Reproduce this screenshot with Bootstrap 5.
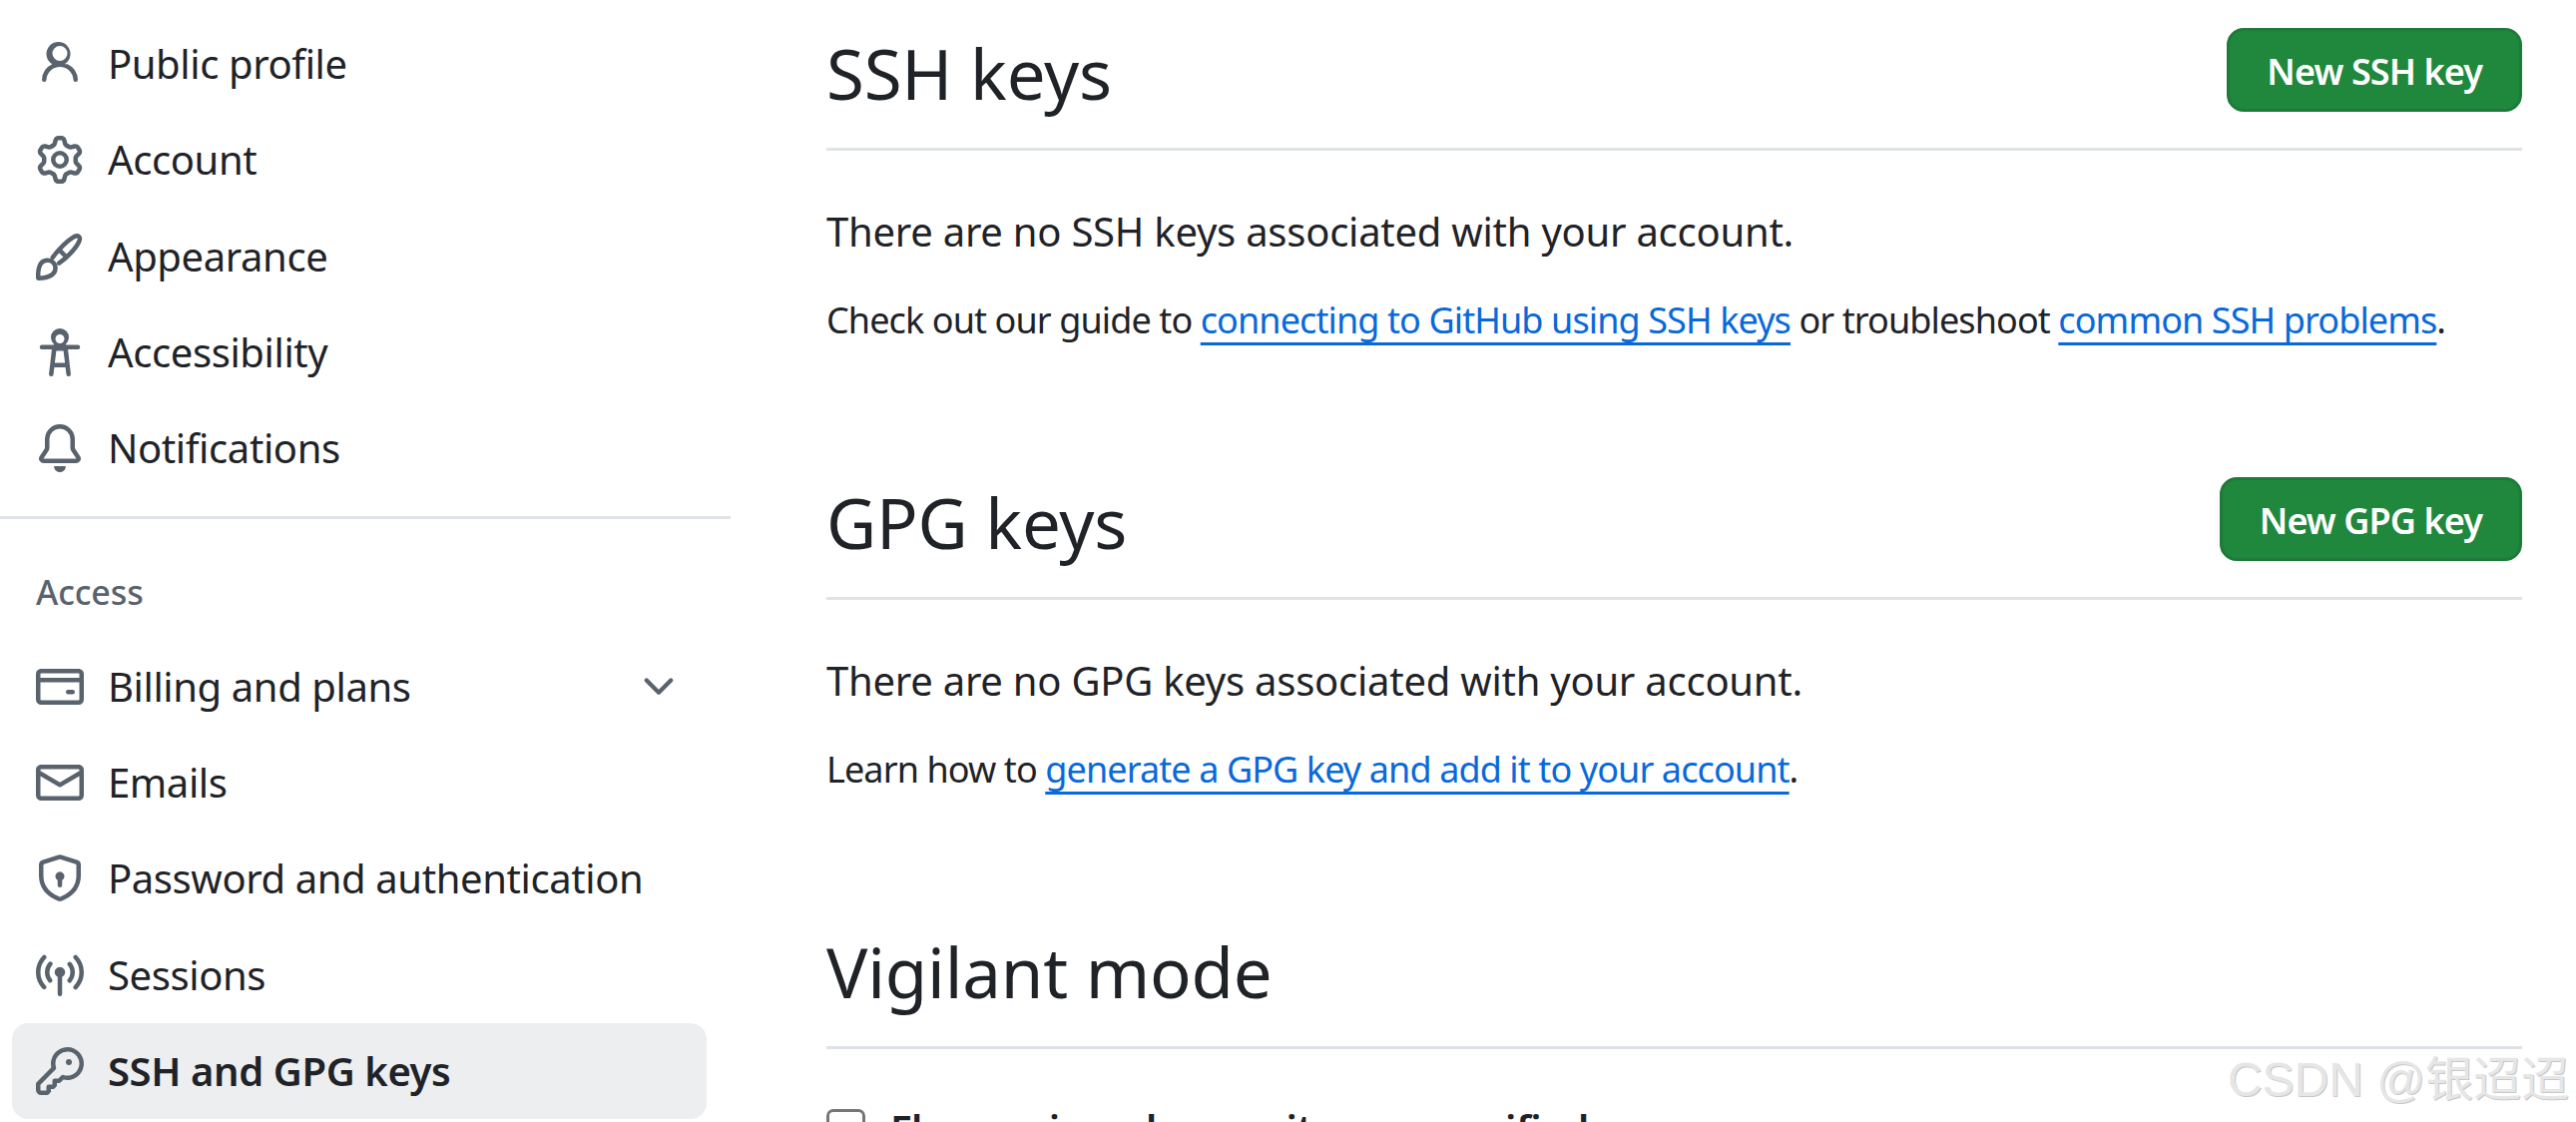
<!DOCTYPE html>
<html lang="en">
<head>
    <meta charset="UTF-8" />
    <meta name="viewport" content="width=device-width, initial-scale=1.0" />
    <title>SSH and GPG keys</title>
    <link href="https://cdn.jsdelivr.net/npm/bootstrap@5.3.0/dist/css/bootstrap.min.css" rel="stylesheet" />
    <style>
        html, body {
            height: 100%;
            overflow: hidden;
        }
        body {
            font-family: "Noto Sans", "Noto Sans CJK SC", sans-serif;
            color: #1f2328;
            background: #fff;
            position: relative;
        }
        .side-col {
            width: 732px;
            flex: none;
            padding-top: 16px;
        }
        .side-link {
            height: 96.3px;
            margin-left: 12px;
            width: 696px;
            padding: 0 0 0 24px;
            gap: 24px;
            font-size: 40px;
            letter-spacing: -0.4px;
            color: #1f2328;
            border-radius: 16px;
        }
        .side-link:hover, .side-link:focus {
            color: #1f2328;
        }
        .side-link svg {
            width: 48px;
            height: 48px;
            fill: #59636e;
            flex: none;
        }
        .side-link .side-line {
            fill: none;
            stroke: #59636e;
            stroke-width: 1.5;
            stroke-linecap: round;
            stroke-linejoin: round;
        }
        .side-link .side-chev {
            margin-left: auto;
            margin-right: 25px;
            width: 46px;
            height: 46px;
        }
        .side-on {
            background: #eceef0;
            font-weight: 600;
        }
        .side-rule {
            height: 3px;
            margin: 20px 0 0;
            background: #dfe3e7;
            opacity: 1;
            border: 0;
        }
        .side-label {
            font-size: 34px;
            font-weight: 500;
            letter-spacing: -0.1px;
            color: #59636e;
            padding-left: 36px;
            margin: 48px 0 21px;
            line-height: 50px;
        }
        .main-col {
            margin-left: 96px;
            width: 1699px;
            flex: none;
            padding-top: 28px;
        }
        .key-sec {
            margin-bottom: 128px;
        }
        .key-head {
            height: 123px;
            padding-bottom: 36px;
            border-bottom: 3px solid #dfe3e7;
        }
        .key-head h2 {
            font-size: 69px;
            font-weight: 400;
            letter-spacing: -0.2px;
            line-height: 92px;
            margin: 5px 0 0;
        }
        .key-btn {
            height: 84px;
            padding: 3px 37px 0;
            font-size: 36px;
            font-weight: 600;
            letter-spacing: -0.9px;
            line-height: 75px;
            border-radius: 17px;
            border: 3px solid #1f7a3a;
            background: #1f883d;
            color: #fff;
        }
        .key-lead {
            font-size: 40px;
            letter-spacing: -0.25px;
            line-height: 70px;
            margin: 46px 0 0;
        }
        .key-note {
            font-size: 36px;
            letter-spacing: -0.9px;
            line-height: 58px;
            margin: 25px 0 0;
        }
        .key-note a {
            color: #0969da;
            text-decoration-thickness: 3px;
            text-underline-offset: 9px;
        }
        .vig-check {
            margin-top: 51px;
            padding-left: 64px;
            font-size: 40px;
            font-weight: 600;
            letter-spacing: -0.45px;
            line-height: 58px;
        }
        .vig-check .form-check-input {
            width: 39px;
            height: 39px;
            margin-left: -64px;
            margin-top: 9px;
            border: 3px solid #767676;
            border-radius: 7px;
        }
        .stamp {
            position: absolute;
            right: 7px;
            bottom: 12px;
            font-family: "Liberation Sans", "Noto Sans CJK SC", sans-serif;
            font-size: 48px;
            line-height: 60px;
            color: #e6e6e6;
            text-shadow: 1px 1px 0 #c8c8c8;
            white-space: nowrap;
        }
    </style>
</head>
<body>
<div class="d-flex">
    <aside class="side-col">
        <nav class="nav flex-column">
            <a class="nav-link side-link d-flex align-items-center" href="#">
                <svg viewBox="0 0 16 16"><path d="M10.561 8.073a6.005 6.005 0 0 1 3.432 5.142.75.75 0 1 1-1.498.07 4.5 4.5 0 0 0-8.99 0 .75.75 0 1 1-1.498-.07 6.004 6.004 0 0 1 3.431-5.142 3.999 3.999 0 1 1 4.123 0ZM10.5 4.5a2.5 2.5 0 1 0-5 0 2.5 2.5 0 0 0 5 0Z"/></svg>
                Public profile
            </a>
            <a class="nav-link side-link d-flex align-items-center" href="#">
                <svg viewBox="0 0 16 16"><path d="M8 0a8.2 8.2 0 0 1 .701.031C9.444.095 9.99.645 10.16 1.29l.288 1.107c.018.066.079.158.212.224.231.114.454.243.668.386.123.082.233.09.299.071l1.103-.303c.644-.176 1.392.021 1.82.63.27.385.506.792.704 1.218.315.675.111 1.422-.364 1.891l-.814.806c-.049.048-.098.147-.088.294.016.257.016.515 0 .772-.01.147.038.246.088.294l.814.806c.475.469.679 1.216.364 1.891a7.977 7.977 0 0 1-.704 1.217c-.428.61-1.176.807-1.82.63l-1.102-.302c-.067-.019-.177-.011-.3.071a5.909 5.909 0 0 1-.668.386c-.133.066-.194.158-.211.224l-.29 1.106c-.168.646-.715 1.196-1.458 1.26a8.006 8.006 0 0 1-1.402 0c-.743-.064-1.289-.614-1.458-1.26l-.289-1.106c-.018-.066-.079-.158-.212-.224a5.738 5.738 0 0 1-.668-.386c-.123-.082-.233-.09-.299-.071l-1.103.303c-.644.176-1.392-.021-1.82-.63a8.12 8.12 0 0 1-.704-1.218c-.315-.675-.111-1.422.363-1.891l.815-.806c.05-.048.098-.147.088-.294a6.214 6.214 0 0 1 0-.772c.01-.147-.038-.246-.088-.294l-.815-.806C.635 6.045.431 5.298.746 4.623a7.92 7.92 0 0 1 .704-1.217c.428-.61 1.176-.807 1.82-.63l1.102.302c.067.019.177.011.3-.071.214-.143.437-.272.668-.386.133-.066.194-.158.211-.224l.29-1.106C6.009.645 6.556.095 7.299.03 7.53.01 7.764 0 8 0Zm-.571 1.525c-.036.003-.108.036-.137.146l-.289 1.105c-.147.561-.549.967-.998 1.189-.173.086-.34.183-.5.29-.417.278-.97.423-1.529.27l-1.103-.303c-.109-.03-.175.016-.195.045-.22.312-.412.644-.573.99-.014.031-.021.11.059.19l.815.806c.411.406.562.957.53 1.456a4.709 4.709 0 0 0 0 .582c.032.499-.119 1.05-.53 1.456l-.815.806c-.081.08-.073.159-.059.19.162.346.353.677.573.989.02.03.085.076.195.046l1.102-.303c.56-.153 1.113-.008 1.53.27.161.107.328.204.501.29.447.222.85.629.997 1.189l.289 1.105c.029.109.101.143.137.146a6.6 6.6 0 0 0 1.142 0c.036-.003.108-.036.137-.146l.289-1.105c.147-.561.549-.967.998-1.189.173-.086.34-.183.5-.29.417-.278.97-.423 1.529-.27l1.103.303c.109.029.175-.016.195-.045.22-.313.411-.644.573-.99.014-.031.021-.11-.059-.19l-.815-.806c-.411-.406-.562-.957-.53-1.456a4.709 4.709 0 0 0 0-.582c-.032-.499.119-1.05.53-1.456l.815-.806c.081-.08.073-.159.059-.19a6.464 6.464 0 0 0-.573-.989c-.02-.03-.085-.076-.195-.046l-1.102.303c-.56.153-1.113.008-1.53-.27a4.44 4.44 0 0 0-.501-.29c-.447-.222-.85-.629-.997-1.189l-.289-1.105c-.029-.11-.101-.143-.137-.146a6.6 6.6 0 0 0-1.142 0ZM11 8a3 3 0 1 1-6 0 3 3 0 0 1 6 0ZM9.5 8a1.5 1.5 0 1 0-3.001.001A1.5 1.5 0 0 0 9.5 8Z"/></svg>
                Account
            </a>
            <a class="nav-link side-link d-flex align-items-center" href="#">
                <svg viewBox="0 0 16 16"><path class="side-line" d="M.75 15.25c-.1-1.9.1-3.7.9-4.9.9-1.3 3-1.5 4.1-.4 1.1 1.1 1 3.1-.3 4.1-1.2.9-2.9 1.2-4.7 1.2Z"/><path class="side-line" d="M5.6 8.3C7.5 5.6 10.6 2.6 12.7 1.4c1.5-.8 2.4.1 1.7 1.6-1 2.2-3.9 5.3-6.7 7.2"/><path class="side-line" d="M7.9 5.9l2.1 2.1"/></svg>
                Appearance
            </a>
            <a class="nav-link side-link d-flex align-items-center" href="#">
                <svg viewBox="0 0 16 16"><path d="M9.923 5.302c.063.063.122.129.178.198H14A.75.75 0 0 1 14 7h-3.3l.578 5.163.362 2.997a.75.75 0 0 1-1.49.18L9.868 13H6.132l-.282 2.34a.75.75 0 0 1-1.49-.18l.362-2.997L5.3 7H2a.75.75 0 0 1 0-1.5h3.9a2.54 2.54 0 0 1 .176-.198 3 3 0 1 1 3.847 0ZM9.2 7.5H6.8l-.5 4h3.4ZM8 5a1.5 1.5 0 1 0 0-3 1.5 1.5 0 0 0 0 3Z"/></svg>
                Accessibility
            </a>
            <a class="nav-link side-link d-flex align-items-center" href="#">
                <svg viewBox="0 0 16 16"><path d="M8 16a2 2 0 0 0 1.985-1.75c.017-.137-.097-.25-.235-.25h-3.5c-.138 0-.252.113-.235.25A2 2 0 0 0 8 16ZM3 5a5 5 0 0 1 10 0v2.947c0 .05.015.098.042.139l1.703 2.555A1.519 1.519 0 0 1 13.482 13H2.518a1.516 1.516 0 0 1-1.263-2.36l1.703-2.554A.255.255 0 0 0 3 7.947Zm5-3.5A3.5 3.5 0 0 0 4.5 5v2.947c0 .346-.102.683-.294.97l-1.703 2.556a.017.017 0 0 0-.003.01l.001.006c0 .002.002.004.004.006l.006.004.007.001h10.964l.007-.001.006-.004.004-.006.001-.007a.017.017 0 0 0-.003-.01l-1.703-2.554a1.745 1.745 0 0 1-.294-.97V5A3.5 3.5 0 0 0 8 1.5Z"/></svg>
                Notifications
            </a>
        </nav>
        <hr class="side-rule" />
        <div class="side-label">Access</div>
        <nav class="nav flex-column">
            <a class="nav-link side-link d-flex align-items-center" href="#">
                <svg viewBox="0 0 16 16"><path d="M10.75 9a.75.75 0 0 0 0 1.5h1.5a.75.75 0 0 0 0-1.5h-1.5Z"/><path d="M0 3.75C0 2.784.784 2 1.75 2h12.5c.966 0 1.75.784 1.75 1.75v8.5A1.75 1.75 0 0 1 14.25 14H1.75A1.75 1.75 0 0 1 0 12.25ZM14.5 6.5h-13v5.75c0 .138.112.25.25.25h12.5a.25.25 0 0 0 .25-.25Zm0-2.75a.25.25 0 0 0-.25-.25H1.75a.25.25 0 0 0-.25.25V5h13Z"/></svg>
                Billing and plans
                <svg class="side-chev" viewBox="0 0 16 16"><path d="M12.78 5.22a.749.749 0 0 1 0 1.06l-4.25 4.25a.749.749 0 0 1-1.06 0L3.22 6.28a.749.749 0 1 1 1.06-1.06L8 8.939l3.72-3.719a.749.749 0 0 1 1.06 0Z"/></svg>
            </a>
            <a class="nav-link side-link d-flex align-items-center" href="#">
                <svg viewBox="0 0 16 16"><path d="M1.75 2h12.5c.966 0 1.75.784 1.75 1.75v8.5A1.75 1.75 0 0 1 14.25 14H1.75A1.75 1.75 0 0 1 0 12.25v-8.5C0 2.784.784 2 1.75 2ZM1.5 12.251c0 .138.112.25.25.25h12.5a.25.25 0 0 0 .25-.25V5.809L8.38 9.397a.75.75 0 0 1-.76 0L1.5 5.809v6.442Zm13-8.181v-.32a.25.25 0 0 0-.25-.25H1.75a.25.25 0 0 0-.25.25v.32L8 7.88Z"/></svg>
                Emails
            </a>
            <a class="nav-link side-link d-flex align-items-center" href="#">
                <svg viewBox="0 0 16 16"><path d="M7.467.133a1.748 1.748 0 0 1 1.066 0l5.25 1.68A1.75 1.75 0 0 1 15 3.48V7c0 1.566-.32 3.182-1.303 4.682-.983 1.498-2.585 2.813-5.032 3.855a1.697 1.697 0 0 1-1.33 0c-2.447-1.042-4.049-2.357-5.032-3.855C1.32 10.182 1 8.566 1 7V3.48a1.75 1.75 0 0 1 1.217-1.667Zm.61 1.429a.25.25 0 0 0-.153 0l-5.25 1.68a.25.25 0 0 0-.174.238V7c0 1.358.275 2.666 1.057 3.86.784 1.194 2.121 2.34 4.366 3.297a.196.196 0 0 0 .154 0c2.245-.956 3.582-2.104 4.366-3.298C13.225 9.666 13.5 8.36 13.5 7V3.48a.251.251 0 0 0-.174-.237l-5.25-1.68ZM8.75 8.582v1.668a.75.75 0 0 1-1.5 0V8.582a1.5 1.5 0 1 1 1.5 0Z"/></svg>
                Password and authentication
            </a>
            <a class="nav-link side-link d-flex align-items-center" href="#">
                <svg viewBox="0 0 16 16"><path d="M8.75 8.582v5.668a.75.75 0 0 1-1.5 0V8.582a1.75 1.75 0 1 1 1.5 0Zm3.983-7.125a.75.75 0 0 1 1.06.026A7.976 7.976 0 0 1 16 7c0 2.139-.84 4.083-2.207 5.517a.75.75 0 1 1-1.086-1.034A6.474 6.474 0 0 0 14.5 7a6.474 6.474 0 0 0-1.793-4.483.75.75 0 0 1 .026-1.06Zm-9.466 0a.75.75 0 0 1 .026 1.06A6.474 6.474 0 0 0 1.5 7a6.47 6.47 0 0 0 1.793 4.483.75.75 0 0 1-1.086 1.034A7.973 7.973 0 0 1 0 7c0-2.139.84-4.083 2.207-5.517a.75.75 0 0 1 1.06-.026Zm8.556 2.321A4.988 4.988 0 0 1 13 7a4.988 4.988 0 0 1-1.177 3.222.75.75 0 1 1-1.146-.967A3.487 3.487 0 0 0 11.5 7c0-.86-.309-1.645-.823-2.255a.75.75 0 0 1 1.146-.967Zm-6.492.958A3.48 3.48 0 0 0 4.5 7a3.48 3.48 0 0 0 .823 2.255.75.75 0 0 1-1.146.967A4.981 4.981 0 0 1 3 7a4.98 4.98 0 0 1 1.18-3.225.75.75 0 1 1 1.143.96Z"/></svg>
                Sessions
            </a>
            <a class="nav-link side-link side-on d-flex align-items-center" href="#">
                <svg viewBox="0 0 16 16"><path d="M10.5 0a5.499 5.499 0 1 1-1.288 10.848l-.932.932a.749.749 0 0 1-.53.22H7v.75a.749.749 0 0 1-.22.53l-.5.5a.749.749 0 0 1-.53.22H5v.75a.749.749 0 0 1-.22.53l-.5.5a.749.749 0 0 1-.53.22h-2A1.75 1.75 0 0 1 0 14.25v-2c0-.199.079-.389.22-.53l4.932-4.932A5.5 5.5 0 0 1 10.5 0Zm-4 5.5c-.001.431.069.86.205 1.269a.75.75 0 0 1-.181.768L1.5 12.56v1.69c0 .138.112.25.25.25h1.69l.06-.06v-1.19a.75.75 0 0 1 .75-.75h1.19l.06-.06v-1.19a.75.75 0 0 1 .75-.75h1.19l1.023-1.025a.75.75 0 0 1 .768-.18A4 4 0 1 0 6.5 5.5ZM11 6a1 1 0 1 1 0-2 1 1 0 0 1 0 2Z"/></svg>
                SSH and GPG keys
            </a>
        </nav>
    </aside>

    <main class="main-col">
        <section class="key-sec">
            <div class="key-head d-flex justify-content-between align-items-center">
                <h2>SSH keys</h2>
                <button class="btn key-btn" type="button">New SSH key</button>
            </div>
            <p class="key-lead">There are no SSH keys associated with your account.</p>
            <p class="key-note">Check out our guide to <a href="#">connecting to GitHub using SSH keys</a> or troubleshoot <a href="#">common SSH problems</a>.</p>
        </section>
        <section class="key-sec">
            <div class="key-head d-flex justify-content-between align-items-center">
                <h2>GPG keys</h2>
                <button class="btn key-btn" type="button">New GPG key</button>
            </div>
            <p class="key-lead">There are no GPG keys associated with your account.</p>
            <p class="key-note">Learn how to <a href="#">generate a GPG key and add it to your account</a>.</p>
        </section>
        <section>
            <div class="key-head d-flex align-items-center">
                <h2>Vigilant mode</h2>
            </div>
            <div class="form-check vig-check">
                <input class="form-check-input" type="checkbox" id="vigilant" />
                <label class="form-check-label" for="vigilant">Flag unsigned commits as unverified</label>
            </div>
        </section>
    </main>
</div>
<div class="stamp">CSDN @银迢迢</div>
<script src="https://cdn.jsdelivr.net/npm/bootstrap@5.3.0/dist/js/bootstrap.bundle.min.js"></script>
</body>
</html>
